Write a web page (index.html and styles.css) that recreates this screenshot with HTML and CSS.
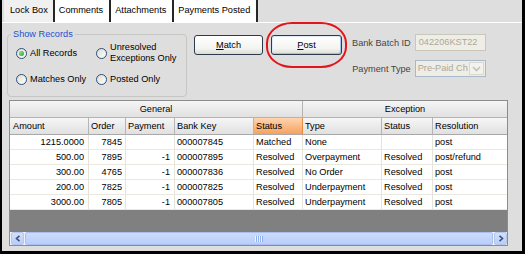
FILE: index.html
```html
<!DOCTYPE html>
<html lang="en">
<head>
    <meta charset="UTF-8" />
    <title>Lock Box</title>
    <link rel="stylesheet" href="styles.css">
</head>
<body>
    <div class="window">
        <div class="tabs">
            <div class="tab active">Lock Box</div>
            <div class="tab">Comments</div>
            <div class="tab">Attachments</div>
            <div class="tab">Payments Posted</div>
        </div>

        <div class="panel">
            <div class="top">
                <fieldset class="group">
                    <legend>Show Records</legend>
                    <div class="radios">
                        <label class="radio"><span class="dot checked"></span>All Records</label>
                        <label class="radio"><span class="dot"></span>Unresolved<br>Exceptions Only</label>
                        <label class="radio"><span class="dot"></span>Matches Only</label>
                        <label class="radio"><span class="dot"></span>Posted Only</label>
                    </div>
                </fieldset>

                <div class="actions">
                    <button class="btn btn-match"><u>M</u>atch</button>
                    <div class="post-wrap">
                        <button class="btn btn-post"><u>P</u>ost</button>
                        <span class="circle"></span>
                    </div>
                </div>

                <div class="fields">
                    <label>Bank Batch ID</label>
                    <div class="input">042206KST22</div>
                    <label>Payment Type</label>
                    <div class="select">
                        <span class="select-text">Pre-Paid Ch</span>
                        <span class="drop">
                            <svg width="9" height="6" viewBox="0 0 9 6"><path d="M1 1l3.5 3.5L8 1" fill="none" stroke="#c2c2bc" stroke-width="1.6"/></svg>
                        </span>
                    </div>
                </div>
            </div>

            <div class="grid">
                <div class="ghead">
                    <div>General</div>
                    <div>Exception</div>
                </div>
                <div class="row chead">
                    <div>Amount</div>
                    <div>Order</div>
                    <div>Payment</div>
                    <div>Bank Key</div>
                    <div class="sorted">Status</div>
                    <div>Type</div>
                    <div>Status</div>
                    <div>Resolution</div>
                </div>
                <div class="row">
                    <div class="r">1215.0000</div><div class="r">7845</div><div class="r"></div><div>000007845</div>
                    <div>Matched</div><div>None</div><div></div><div>post</div>
                </div>
                <div class="row">
                    <div class="r">500.00</div><div class="r">7895</div><div class="r">-1</div><div>000007895</div>
                    <div>Resolved</div><div>Overpayment</div><div>Resolved</div><div>post/refund</div>
                </div>
                <div class="row">
                    <div class="r">300.00</div><div class="r">4765</div><div class="r">-1</div><div>000007836</div>
                    <div>Resolved</div><div>No Order</div><div>Resolved</div><div>post</div>
                </div>
                <div class="row">
                    <div class="r">200.00</div><div class="r">7825</div><div class="r">-1</div><div>000007825</div>
                    <div>Resolved</div><div>Underpayment</div><div>Resolved</div><div>post</div>
                </div>
                <div class="row">
                    <div class="r">3000.00</div><div class="r">7805</div><div class="r">-1</div><div>000007805</div>
                    <div>Resolved</div><div>Underpayment</div><div>Resolved</div><div>post</div>
                </div>
                <div class="fill"></div>
                <div class="hscroll">
                    <span class="sb-btn">
                        <svg width="6" height="7" viewBox="0 0 6 7"><path d="M4.5 0.8L1.5 3.5l3 2.7" fill="none" stroke="#3d5284" stroke-width="1.6"/></svg>
                    </span>
                    <span class="thumb">
                        <svg width="8" height="6" viewBox="0 0 8 6">
                            <path d="M0.5 0v6M2.5 0v6M4.5 0v6M6.5 0v6" stroke="#eef3fe"/>
                            <path d="M1.5 0v6M3.5 0v6M5.5 0v6M7.5 0v6" stroke="#8eaef0"/>
                        </svg>
                    </span>
                    <span class="sb-btn">
                        <svg width="6" height="7" viewBox="0 0 6 7"><path d="M1.5 0.8l3 2.7-3 2.7" fill="none" stroke="#3d5284" stroke-width="1.6"/></svg>
                    </span>
                </div>
            </div>
        </div>
    </div>
</body>
</html>
```

FILE: styles.css
```css
* {
    box-sizing: border-box;
}
body {
    margin: 0;
    background: #fff;
    font-family: "Liberation Sans", Arial, sans-serif;
    font-size: 9.2px;
    color: #000;
}
.window {
    width: 525px;
    height: 254px;
    border-left: 2px solid #000;
    border-right: 3px solid #000;
    border-bottom: 3px solid #000;
    background: #dedede;
    display: flex;
    flex-direction: column;
}

/* tabs */
.tabs {
    display: flex;
    height: 23px;
    padding-left: 2px;
    border-bottom: 1px solid #fff;
}
.tab {
    padding: 5px 6px 0 4px;
    line-height: 11px;
    background: #fff;
    border-right: 2px solid #262626;
}
.tab.active {
    background: #f0f0f0;
    padding: 5px 5px 0 6px;
}

/* top area */
.panel {
    flex: 1;
}
.top {
    display: flex;
    align-items: flex-start;
    height: 77px;
    padding-left: 5px;
}
.group {
    width: 180px;
    margin: 6px 0 0;
    padding: 1px 8px 11px;
    border: 1px solid #c6c6c2;
    border-radius: 4px;
}
.group legend {
    padding: 0 2px;
    margin-left: -5px;
    line-height: 11px;
    color: #1e50d2;
}
.radios {
    display: grid;
    grid-template-columns: 80px 1fr;
    grid-template-rows: 24px 12px;
    row-gap: 8px;
    align-items: center;
}
.radio {
    display: flex;
    align-items: center;
    line-height: 11px;
}
.dot {
    flex: none;
    width: 11px;
    height: 11px;
    margin-right: 3px;
    border: 1px solid #2a4f78;
    border-radius: 50%;
    background: linear-gradient(135deg, #dcdcd5, #fff);
    display: flex;
    align-items: center;
    justify-content: center;
}
.dot.checked::after {
    content: "";
    width: 5px;
    height: 5px;
    border-radius: 50%;
    background: radial-gradient(circle at 35% 35%, #7de07d, #21a121);
}

.actions {
    display: flex;
    margin: 12px 0 0 7px;
}
.btn {
    height: 20px;
    padding: 0;
    font: inherit;
    color: #000;
    border: 1px solid #2b3a4c;
    border-radius: 3px;
    background: linear-gradient(#ffffff, #f3f3ef 70%, #dcdcd5);
}
.btn-match {
    width: 69px;
}
.post-wrap {
    position: relative;
    margin-left: 8px;
}
.btn-post {
    width: 71px;
    box-shadow: inset -1px -1px 0 #a9bfe4, inset 1px 1px 0 #dfe9f8;
}
.circle {
    position: absolute;
    left: -5px;
    top: -13px;
    width: 81px;
    height: 46px;
    border: 2px solid #e3151b;
    border-radius: 26px / 21px;
}

.fields {
    display: grid;
    grid-template-columns: auto 71px;
    column-gap: 4px;
    row-gap: 9px;
    align-items: center;
    margin: 11px 0 0 10px;
}
.fields label {
    text-align: right;
    color: #444;
}
.input,
.select {
    height: 17px;
    background: #efeee6;
    color: #aca899;
    white-space: nowrap;
    overflow: hidden;
}
.input {
    border: 1px solid #c9c7ba;
    padding-left: 3px;
    line-height: 15px;
}
.select {
    display: flex;
    border: 1px solid #a9b9cc;
}
.select-text {
    flex: 1;
    padding-left: 2px;
    line-height: 15px;
}
.drop {
    flex: none;
    width: 15px;
    margin: 1px;
    border: 1px solid #d9d8d0;
    background: #f3f2ec;
    display: flex;
    align-items: center;
    justify-content: center;
}

/* grid */
.grid {
    width: 499px;
    height: 146px;
    margin-left: 7px;
    border: 1px solid #8c8c8c;
    background: #808080;
    display: flex;
    flex-direction: column;
}
.ghead {
    display: grid;
    grid-template-columns: 293px 204px;
    height: 17px;
}
.ghead div {
    text-align: center;
    line-height: 16px;
    border-right: 1px solid #b3b3b3;
    border-bottom: 1px solid #b3b3b3;
    background: linear-gradient(#f5f5f5, #e1e1e1);
}
.ghead div:last-child {
    border-right: 0;
}
.row {
    display: grid;
    grid-template-columns: 79px 37px 49px 79px 49px 79px 51px 74px;
    height: 15px;
}
.row > div {
    padding: 0 2px;
    line-height: 14px;
    white-space: nowrap;
    overflow: hidden;
    background: #fff;
    border-right: 1px solid #e6e3d8;
    border-bottom: 1px solid #ebe9df;
}
.row > div:last-child {
    border-right: 0;
}
.row > .r {
    text-align: right;
    padding-right: 4px;
}
.row > .r:nth-child(2) {
    padding-right: 3px;
}
.chead {
    height: 17px;
}
.chead > div {
    line-height: 16px;
    background: linear-gradient(#f6f6f6, #e0e0e0);
    border-right-color: #b5b5b5;
    border-bottom-color: #a9a9a9;
}
.chead > div:first-child {
    padding-left: 3px;
}
.chead > .sorted {
    background: linear-gradient(#fdd5b0, #f6a15e);
    border-right-color: #e58c45;
}
.fill {
    flex: 1;
}
.hscroll {
    height: 13px;
    display: flex;
    padding-left: 1px;
    background: #eef2fb;
}
.sb-btn {
    width: 13px;
    border: 1px solid #b4c7ef;
    border-radius: 2px;
    background: linear-gradient(#d3e0fc, #b9cdf7);
    display: flex;
    align-items: center;
    justify-content: center;
}
.thumb {
    flex: 1;
    margin: 0 1px;
    border: 1px solid #a9c0ee;
    border-radius: 2px;
    background: linear-gradient(#cddbfd, #b9cefa);
    display: flex;
    align-items: center;
    justify-content: center;
}
```
